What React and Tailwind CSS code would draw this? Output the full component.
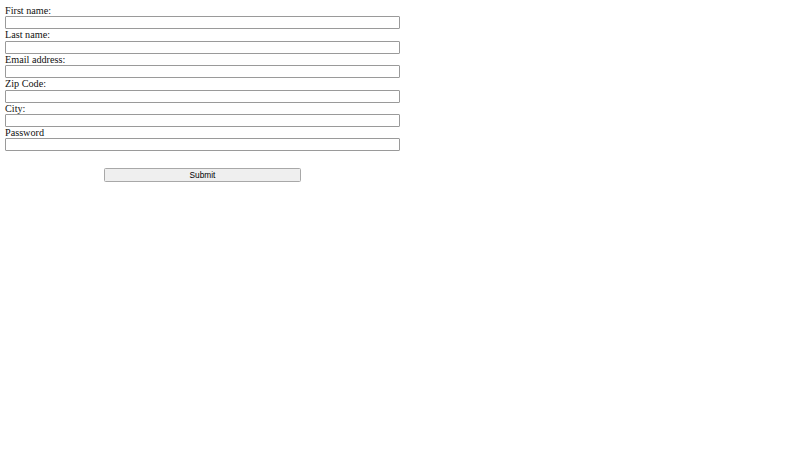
export default function App() {
  const fields = ["First name:", "Last name:", "Email address:", "Zip Code:", "City:", "Password"];
  return (
    <div className="w-[800px] h-[450px] bg-white p-[5px]" style={{ fontFamily: '"Liberation Serif", serif' }}>
      <form className="flex flex-col w-[395px]">
        {fields.map((f) => (
          <div key={f} className="flex flex-col">
            <label className="text-[10.2px] leading-[11.4px] text-[#111]">{f}</label>
            <input
              type={f === "Password" ? "password" : "text"}
              className="h-[13px] w-[395px] border border-[#9a9a9a] rounded-[1px] bg-white outline-none"
            />
          </div>
        ))}
        <div className="flex justify-center mt-[16.5px]">
          <button
            type="button"
            className="w-[197px] h-[14px] border border-[#a8a8a8] rounded-[1.5px] bg-[#efefef] text-[8.3px] leading-[12px] text-black"
            style={{ fontFamily: '"Liberation Sans", Arial, sans-serif' }}
          >
            Submit
          </button>
        </div>
      </form>
    </div>
  );
}
